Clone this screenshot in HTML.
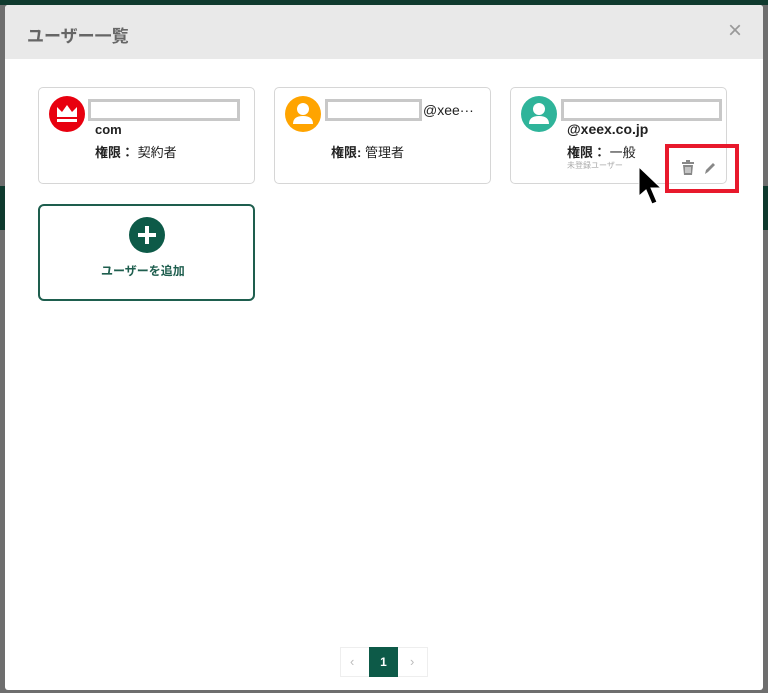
<!DOCTYPE html>
<html><head><meta charset="utf-8"><style>
*{box-sizing:border-box;margin:0;padding:0}
body{width:768px;height:693px;overflow:hidden;background:#6e6e6e;font-family:"Liberation Sans","Noto Sans CJK JP",sans-serif;position:relative}
.abs{position:absolute}
.modal{left:5px;top:5px;width:758px;height:685px;background:#fff;border-radius:3px;overflow:hidden}
.hdr{left:0;top:0;width:758px;height:54px;background:#e9e9e9}
.card{position:absolute;width:217px;height:97px;border:1px solid #d6d6d6;border-radius:5px;background:#fff}
.av{position:absolute;width:36px;height:36px;border-radius:50%}
.box{position:absolute;height:22px;border:3px solid #c8c8c8;background:#fff}
.t{position:absolute;font-size:13px;color:#222;white-space:nowrap}
</style></head><body>
<div class="abs" style="left:0;top:0;width:768px;height:5px;background:#0f3a2e"></div>
<div class="abs" style="left:0;top:186px;width:5px;height:44px;background:#0f3a2e"></div>
<div class="abs" style="left:763px;top:186px;width:5px;height:44px;background:#0f3a2e"></div>
<div class="abs modal">
 <div class="abs hdr"></div>
 <div class="abs" style="left:22px;top:17px;font-size:17px;font-weight:bold;color:#666">ユーザー一覧</div>
 <div class="abs" style="left:723px;top:12px;font-size:24px;color:#999">×</div>
</div>
<div class="card" style="left:38px;top:87px"></div>
<div class="av" style="left:49px;top:96px;background:#e8000f"></div>
<svg class="abs" style="left:55px;top:104px" width="24" height="20" viewBox="0 0 24 20"><path d="M2 3 L7 8 L12 1 L17 8 L22 3 L22 13 L2 13Z" fill="#fff"/><rect x="2" y="15" width="20" height="3" fill="#fff"/></svg>
<div class="box" style="left:88px;top:99px;width:152px"></div>
<div class="t" style="left:95px;top:122px;font-weight:bold">com</div>
<div class="t" style="left:95px;top:142px;font-size:13px"><b>権限：</b> 契約者</div>
<div class="card" style="left:274px;top:87px"></div>
<div class="av" style="left:285px;top:96px;background:#ffa400"></div>
<svg class="abs" style="left:285px;top:96px" width="36" height="36" viewBox="0 0 36 36"><circle cx="18" cy="13" r="6" fill="#fff"/><path d="M8 28 Q8 20 18 20 Q28 20 28 28Z" fill="#fff"/></svg>
<div class="box" style="left:325px;top:99px;width:97px"></div>
<div class="t" style="left:423px;top:102px;font-size:14px">@xee···</div>
<div class="t" style="left:331px;top:142px;font-size:13px"><b>権限:</b> 管理者</div>
<div class="card" style="left:510px;top:87px"></div>
<div class="av" style="left:521px;top:96px;background:#2fb49a"></div>
<svg class="abs" style="left:521px;top:96px" width="36" height="36" viewBox="0 0 36 36"><circle cx="18" cy="13" r="6" fill="#fff"/><path d="M8 28 Q8 20 18 20 Q28 20 28 28Z" fill="#fff"/></svg>
<div class="box" style="left:561px;top:99px;width:161px"></div>
<div class="t" style="left:567px;top:121px;font-size:14px;font-weight:bold">@xeex.co.jp</div>
<div class="t" style="left:567px;top:142px;font-size:13px"><b>権限：</b> 一般</div>
<div class="t" style="left:567px;top:160px;font-size:8px;color:#aaa">未登録ユーザー</div>
<svg class="abs" style="left:681px;top:160px" width="14" height="16" viewBox="0 0 14 16"><rect x="1" y="2" width="12" height="2" fill="#888"/><rect x="5" y="0" width="4" height="2" fill="#888"/><path d="M2 5 H12 L11 15 H3Z" fill="#888"/><path d="M5 7V13M7 7V13M9 7V13" stroke="#fff" stroke-width="1"/></svg>
<svg class="abs" style="left:703px;top:160px" width="14" height="16" viewBox="0 0 14 16"><path d="M2 14 L3 10 L10 3 L12 5 L5 12Z" fill="#888"/></svg>
<div class="abs" style="left:665px;top:144px;width:74px;height:49px;border:4px solid #e8192c"></div>
<svg class="abs" style="left:638px;top:166px" width="26" height="42" viewBox="0 0 26 42"><path d="M1 1 L1 30 L8 24 L14 38 L19 36 L13 22 L23 22Z" fill="#000" stroke="#fff" stroke-width="1"/></svg>
<div class="abs" style="left:38px;top:204px;width:217px;height:97px;border:2px solid #1e5e4e;border-radius:6px"></div>
<div class="av" style="left:129px;top:217px;background:#0d5a48"></div>
<svg class="abs" style="left:129px;top:217px" width="36" height="36" viewBox="0 0 36 36"><path d="M18 9V27M9 18H27" stroke="#fff" stroke-width="4"/></svg>
<div class="t" style="left:101px;top:262px;font-size:12px;font-weight:bold;color:#1e5e4e">ユーザーを追加</div>
<div class="abs" style="left:340px;top:647px;width:88px;height:30px;border:1px solid #eee"></div>
<div class="abs" style="left:369px;top:647px;width:29px;height:30px;background:#0d5a48;color:#fff;font-size:12px;font-weight:bold;text-align:center;line-height:30px">1</div>
<div class="t" style="left:350px;top:654px;color:#bbb">‹</div>
<div class="t" style="left:410px;top:654px;color:#bbb">›</div>
</body></html>
